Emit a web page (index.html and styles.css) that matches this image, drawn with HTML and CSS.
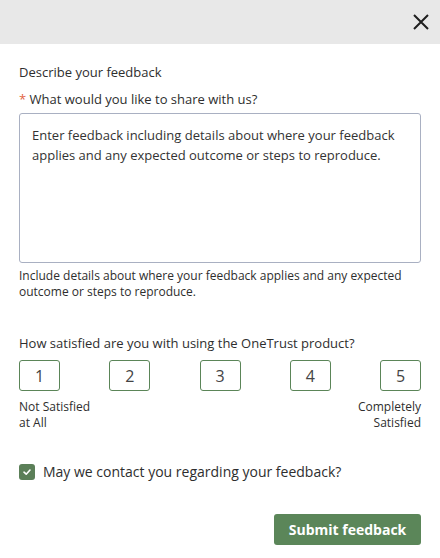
FILE: index.html
```html
<!DOCTYPE html>
<html lang="en">
<head>
<meta charset="utf-8">
<title>Feedback</title>
<link rel="stylesheet" href="styles.css">
</head>
<body>
<div class="panel">
  <header class="header">
    <button class="close" aria-label="Close">
      <svg width="16" height="16" viewBox="0 0 16 16"><path d="M1 1 L15 15 M15 1 L1 15" stroke="#1f1f1f" stroke-width="2" fill="none"/></svg>
    </button>
  </header>
  <main class="content">
    <div class="title">Describe your feedback</div>
    <label class="label" for="fb"><span class="req">*</span> What would you like to share with us?</label>
    <textarea id="fb" class="textarea" placeholder="Enter feedback including details about where your feedback applies and any expected outcome or steps to reproduce."></textarea>
    <div class="help">Include details about where your feedback applies and any expected outcome or steps to reproduce.</div>
    <div class="question">How satisfied are you with using the OneTrust product?</div>
    <div class="rating">
      <button class="rate">1</button>
      <button class="rate">2</button>
      <button class="rate">3</button>
      <button class="rate">4</button>
      <button class="rate">5</button>
    </div>
    <div class="scale">
      <span class="scale-left">Not Satisfied<br>at All</span>
      <span class="scale-right">Completely<br>Satisfied</span>
    </div>
    <label class="check-row">
      <span class="checkbox">
        <svg width="10" height="10" viewBox="0 0 10 10"><path d="M2 5.2 L4.2 7.2 L8 3" stroke="#fff" stroke-width="1.6" fill="none" stroke-linecap="round" stroke-linejoin="round"/></svg>
      </span>
      <span class="check-text">May we contact you regarding your feedback?</span>
    </label>
    <div class="actions">
      <button class="submit">Submit feedback</button>
    </div>
  </main>
</div>
</body>
</html>
```

FILE: styles.css
```css
* { box-sizing: border-box; }
html, body { margin: 0; padding: 0; background: #fff; }
body {
  font-family: "Open Sans", "Noto Sans", Arial, sans-serif;
  color: #2e2e2e;
  width: 440px;
}
.header {
  height: 44px;
  background: #e8e8e8;
  display: flex;
  justify-content: flex-end;
  align-items: center;
  padding-right: 11px;
}
.close {
  border: 0;
  background: none;
  padding: 0;
  width: 16px;
  height: 16px;
  display: flex;
  cursor: pointer;
}
.content {
  padding: 0 19px;
  display: flex;
  flex-direction: column;
}
.title {
  margin-top: 19px;
  font-size: 13px;
  line-height: 18px;
}
.label {
  margin-top: 9px;
  font-size: 13px;
  line-height: 18px;
}
.req { color: #e2653f; }
.textarea {
  margin-top: 5px;
  height: 150px;
  width: 100%;
  border: 1px solid #a9b0c2;
  border-radius: 3px;
  padding: 11px 12px;
  font-family: inherit;
  font-size: 13px;
  line-height: 20px;
  color: #2e2e2e;
  resize: none;
  outline: none;
}
.textarea::placeholder { color: #333; opacity: 1; }
.help {
  margin-top: 5px;
  font-size: 12px;
  line-height: 16px;
}
.question {
  margin-top: 34px;
  font-size: 13px;
  line-height: 18px;
}
.rating {
  margin-top: 8px;
  display: flex;
  justify-content: space-between;
}
.rate {
  width: 41px;
  height: 31px;
  border: 1px solid #5b8558;
  border-radius: 3px;
  background: #fff;
  font-family: inherit;
  font-size: 16px;
  color: #444;
  padding: 0;
  cursor: pointer;
}
.scale {
  margin-top: 8px;
  display: flex;
  justify-content: space-between;
  font-size: 12px;
  line-height: 16px;
}
.scale-right { text-align: right; }
.check-row {
  margin-top: 32px;
  display: flex;
  align-items: center;
  gap: 8px;
  cursor: pointer;
}
.checkbox {
  width: 16px;
  height: 16px;
  border-radius: 3px;
  background: #5b7f58;
  display: flex;
  align-items: center;
  justify-content: center;
}
.check-text {
  font-size: 14px;
  line-height: 18px;
}
.actions {
  margin-top: 33px;
  display: flex;
  justify-content: flex-end;
}
.submit {
  height: 31px;
  width: 147px;
  border: 0;
  border-radius: 3px;
  background: #5b8659;
  color: #fff;
  font-family: inherit;
  font-weight: 700;
  font-size: 14px;
  padding: 0;
  cursor: pointer;
}
```
